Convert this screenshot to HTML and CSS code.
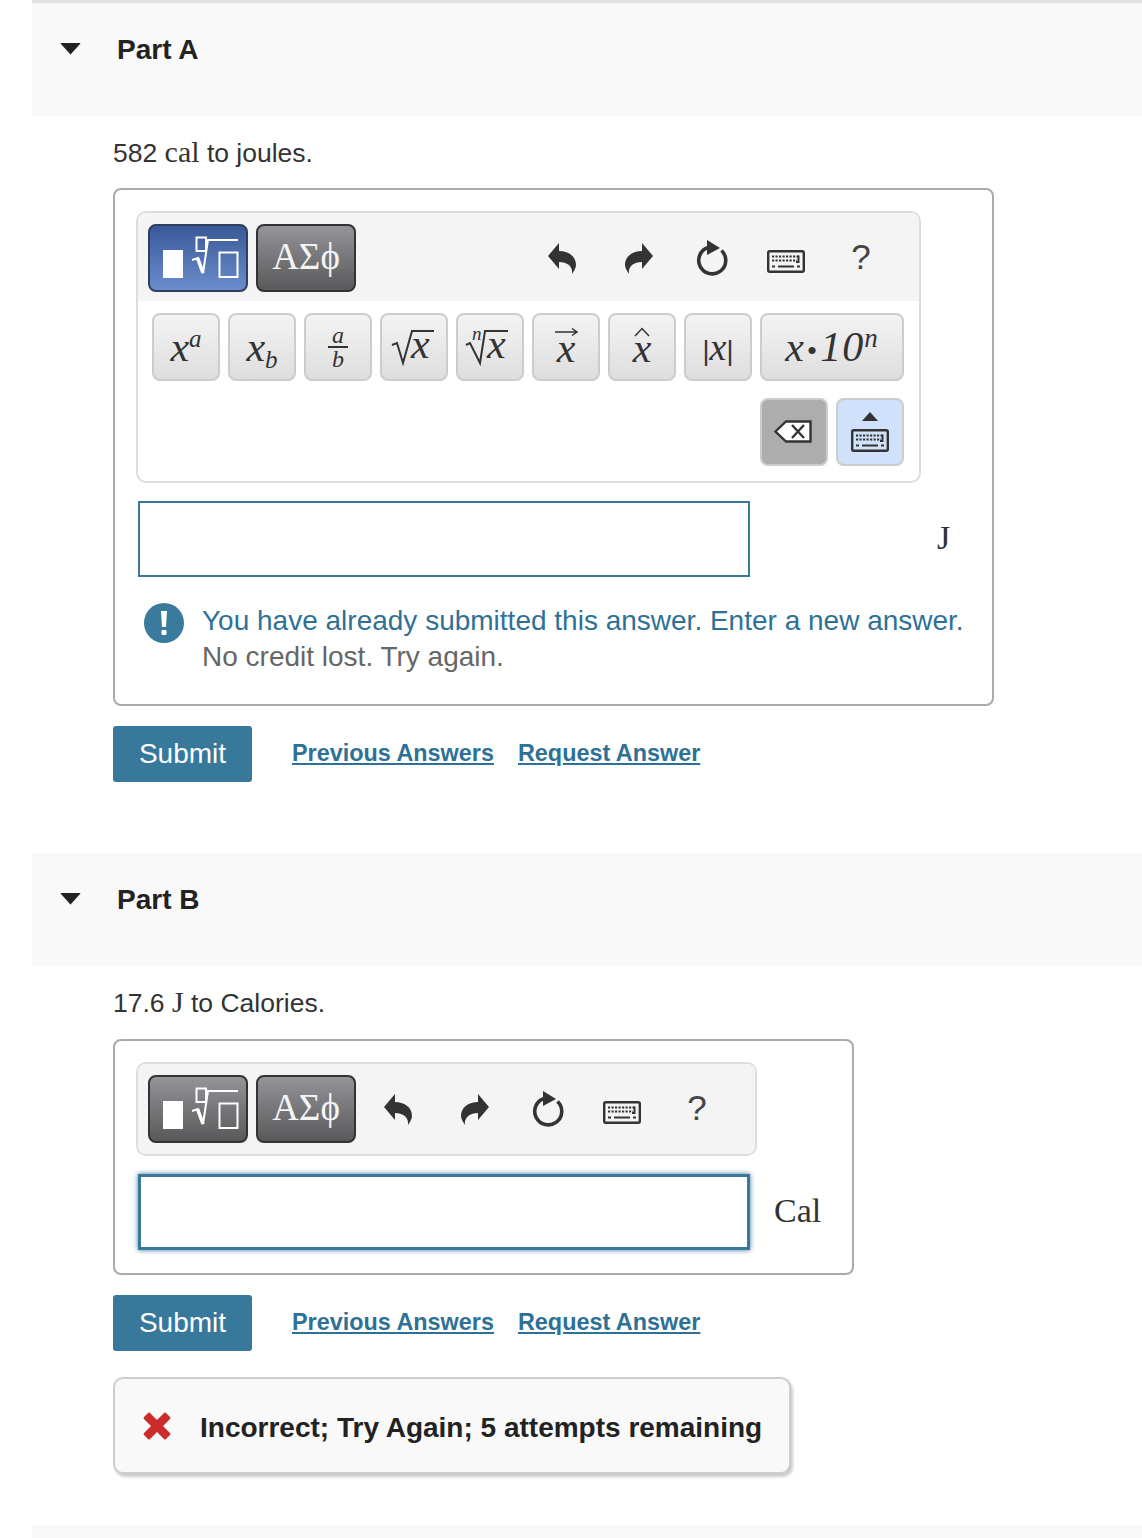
FILE: index.html
```html
<!DOCTYPE html>
<html lang="en">
<head>
  <meta charset="UTF-8" />
  <title>Part A and Part B</title>
  <link rel="stylesheet" href="styles.css">
</head>
<body>
  <svg class="defs" width="0" height="0">
    <symbol id="undo" viewBox="0 0 28 32">
      <path d="M0 14 L11 1 V9 C20 9 28 14 28 23 C28 26 26 29 24 32 C25 25 20 20 11 20 V27 Z" />
    </symbol>
    <symbol id="keyboard" viewBox="0 0 38 23">
      <rect x="1.2" y="1.2" width="35.6" height="20.6" rx="1.5" fill="none" stroke="currentColor" stroke-width="2.4" />
      <path d="M5 6.500 H33 M5 10.500 H30" fill="none" stroke="currentColor" stroke-width="2" stroke-dasharray="2.200 1.300" />
      <path d="M31.500 5.500 V12 H29 M11 16.500 H27" fill="none" stroke="currentColor" stroke-width="2" />
      <path d="M5 16.500 H8 M30 16.500 H33" fill="none" stroke="currentColor" stroke-width="2" />
    </symbol>
    <symbol id="refresh" viewBox="0 0 36 36">
      <path d="M14 7.500 A13.500 13.500 0 1 0 27.500 10.500" fill="none" stroke="currentColor" stroke-width="3.600" />
      <path d="M13 0 L26 8 L13 15 Z" />
    </symbol>
    <symbol id="template" viewBox="0 0 96 64">
      <rect x="13" y="24" width="20" height="28" fill="#fff" />
      <path d="M46.500 11.500 H56 V25 H46.500 Z M42 34 L48 32 L53 47 L58 14 H88 M69.500 26.500 H87.500 V51 H69.500 Z" fill="none" stroke="#fff" stroke-width="2" />
      <path d="M47.500 32 L53 47" fill="none" stroke="#fff" stroke-width="3.500" />
    </symbol>
  </svg>

  <!-- Part A -->
  <section class="part">
    <header class="part-head part-head-first">
      <svg class="caret" width="21" height="12" viewBox="0 0 21 12"><path d="M1 0 H20 Q21 0 20 1 L11 11 Q10.500 12 10 11 L1 1 Q0 0 1 0 Z" /></svg>
      <h2>Part A</h2>
    </header>
    <div class="part-body">
      <p class="question">582 <span class="unit">cal</span> to joules.</p>

      <div class="answer-box box-wide">
        <div class="editor">
          <div class="tools">
            <button class="mode mode-on"><svg width="96" height="64"><use href="#template" /></svg></button>
            <button class="mode"><span class="greek">ΑΣϕ</span></button>
            <div class="actions actions-wide">
              <span class="act act-undo"><svg width="28" height="32"><use href="#undo" /></svg></span>
              <span class="act act-redo"><svg class="flip" width="28" height="32"><use href="#undo" /></svg></span>
              <span class="act act-refresh"><svg width="36" height="36"><use href="#refresh" /></svg></span>
              <span class="act act-keys"><svg width="38" height="23"><use href="#keyboard" /></svg></span>
              <span class="act act-help">?</span>
            </div>
          </div>
          <div class="palette">
            <div class="keys">
              <button class="key"><span class="mi">x<sup>a</sup></span></button>
              <button class="key"><span class="mi">x<sub>b</sub></span></button>
              <button class="key"><span class="frac"><span class="num">a</span><span class="den">b</span></span></button>
              <button class="key">
                <svg class="root" width="44" height="40" viewBox="0 0 44 40"><path class="surd" d="M0 18 L5 16 L11 36 L20 4 H42" /><text class="surd-x" x="19" y="31">x</text></svg>
              </button>
              <button class="key">
                <svg class="root" width="48" height="40" viewBox="0 0 48 40"><path class="surd" d="M0 18 L4 16 L14 36 L19 4 H42" /><text class="surd-n" x="6" y="13">n</text><text class="surd-x" x="21" y="31">x</text></svg>
              </button>
              <button class="key">
                <span class="accent">
                  <svg width="24" height="10" viewBox="0 0 24 10"><path class="thin" d="M1 5 H22 M18 1.500 L23 5 L18 8.500" /></svg>
                  <span class="mi">x</span>
                </span>
              </button>
              <button class="key">
                <span class="accent">
                  <svg width="18" height="10" viewBox="0 0 18 10"><path class="thin" d="M2 9 L9 1.500 L16 9" /></svg>
                  <span class="mi">x</span>
                </span>
              </button>
              <button class="key"><span class="abs">|<span class="abs-x">x</span>|</span></button>
              <button class="key key-long"><span class="sci">x<span class="dot">•</span>10<sup>n</sup></span></button>
            </div>
            <div class="keys keys-end">
              <button class="key key-grey">
                <svg class="bs-icon" width="38" height="23" viewBox="0 0 38 23"><path class="bs" d="M1.500 11.500 L12 1.500 H36.500 V21.500 H12 Z" fill="#fff" /><path class="bs" d="M18 5 L30 18 M30 5 L18 18" fill="none" /></svg>
              </button>
              <button class="key key-blue">
                <span class="kb-up">
                  <svg width="16" height="9" viewBox="0 0 16 9"><path d="M8 0 L16 9 H0 Z" /></svg>
                  <svg width="38" height="23"><use href="#keyboard" /></svg>
                </span>
              </button>
            </div>
          </div>
        </div>

        <div class="answer-row">
          <div class="answer-input"></div>
          <span class="answer-unit unit-j">J</span>
        </div>

        <div class="message">
          <svg class="message-icon" width="40" height="40" viewBox="0 0 40 40">
            <circle cx="20" cy="20" r="20" fill="#3a7a9c" />
            <path d="M17 8 H23 L22 24 H18 Z" fill="#fff" />
            <rect x="17.500" y="27" width="5" height="5" rx="1" fill="#fff" />
          </svg>
          <div class="message-text">
            <div class="message-main">You have already submitted this answer. Enter a new answer.</div>
            <div class="message-sub">No credit lost. Try again.</div>
          </div>
        </div>
      </div>

      <div class="submit-row">
        <button class="submit">Submit</button>
        <a class="link" href="#">Previous Answers</a>
        <a class="link" href="#">Request Answer</a>
      </div>
    </div>
  </section>

  <!-- Part B -->
  <section class="part part-b">
    <header class="part-head">
      <svg class="caret" width="21" height="12" viewBox="0 0 21 12"><path d="M1 0 H20 Q21 0 20 1 L11 11 Q10.500 12 10 11 L1 1 Q0 0 1 0 Z" /></svg>
      <h2>Part B</h2>
    </header>
    <div class="part-body">
      <p class="question">17.6 <span class="unit">J</span> to Calories.</p>

      <div class="answer-box box-narrow">
        <div class="editor editor-narrow">
          <div class="tools tools-only">
            <button class="mode"><svg width="96" height="64"><use href="#template" /></svg></button>
            <button class="mode"><span class="greek">ΑΣϕ</span></button>
            <div class="actions">
              <span class="act act-undo"><svg width="28" height="32"><use href="#undo" /></svg></span>
              <span class="act act-redo"><svg class="flip" width="28" height="32"><use href="#undo" /></svg></span>
              <span class="act act-refresh"><svg width="36" height="36"><use href="#refresh" /></svg></span>
              <span class="act act-keys"><svg width="38" height="23"><use href="#keyboard" /></svg></span>
              <span class="act act-help">?</span>
            </div>
          </div>
        </div>

        <div class="answer-row">
          <div class="answer-input answer-focus"></div>
          <span class="answer-unit unit-cal">Cal</span>
        </div>
      </div>

      <div class="submit-row">
        <button class="submit">Submit</button>
        <a class="link" href="#">Previous Answers</a>
        <a class="link" href="#">Request Answer</a>
      </div>

      <div class="feedback">
        <svg width="28" height="28" viewBox="0 0 28 28"><path d="M7 1 L14 8 L21 1 Q22 0 23 1 L27 5 Q28 6 27 7 L20 14 L27 21 Q28 22 27 23 L23 27 Q22 28 21 27 L14 20 L7 27 Q6 28 5 27 L1 23 Q0 22 1 21 L8 14 L1 7 Q0 6 1 5 L5 1 Q6 0 7 1 Z" fill="#cc2b2b" /></svg>
        <span class="feedback-text">Incorrect; Try Again; 5 attempts remaining</span>
      </div>
    </div>
  </section>

  <div class="next-part"></div>
</body>
</html>
```

FILE: styles.css
```css
* {
  box-sizing: border-box;
}

body {
  margin: 0;
  font-family: "Liberation Sans", Arial, sans-serif;
  color: #333;
  background: #fff;
}

.defs {
  position: absolute;
}

button {
  padding: 0;
  font: inherit;
}

/* part header */

.part-head {
  display: flex;
  align-items: flex-start;
  height: 113px;
  margin-left: 32px;
  padding: 22px 0 0 28px;
  background: #f9f9f9;
}

.part-head-first {
  height: 116px;
  padding-top: 22px;
  border-top: 3px solid #e2e2e2;
}

.part-head h2 {
  margin: 0 0 0 36px;
  font-size: 28px;
  line-height: 50px;
  color: #222;
}

.caret {
  margin-top: 18px;
  fill: #222;
}

.part-b {
  margin-top: 71px;
}

.part-body {
  padding-left: 113px;
}

.question {
  margin: 18px 0 17px;
  font-size: 26.500px;
  line-height: 36px;
}

.unit {
  font-family: "Liberation Serif", serif;
  font-size: 30px;
}

.part-b .question {
  margin-bottom: 18px;
}

/* answer box */

.answer-box {
  border: 2px solid #aaa;
  border-radius: 8px;
  padding: 21px 21px 0;
}

.box-wide {
  width: 881px;
  height: 518px;
}

.box-narrow {
  width: 741px;
  height: 236px;
}

.editor {
  width: 785px;
  height: 272px;
  border: 2px solid #ddd;
  border-radius: 10px;
  overflow: hidden;
}

.editor-narrow {
  width: 621px;
  height: 94px;
}

.tools {
  display: flex;
  align-items: flex-start;
  gap: 8px;
  height: 88px;
  padding: 11px 0 0 10px;
  background: #f4f4f4;
}

.tools-only {
  height: 100%;
}

.mode {
  display: flex;
  align-items: center;
  justify-content: center;
  width: 100px;
  height: 68px;
  border: 2px solid #333;
  border-radius: 8px;
  background: linear-gradient(#949499, #59595b);
}

.mode-on {
  border-color: #2f3f5f;
  background: linear-gradient(#3a5897, #6b8dcb);
}

.greek {
  padding-bottom: 4px;
  font-family: "Liberation Serif", serif;
  font-size: 37px;
  line-height: 1;
  color: #f4f4f4;
}

.actions {
  display: flex;
  align-items: center;
  height: 68px;
  margin-left: -4px;
  color: #333;
  fill: #333;
}

.actions-wide {
  margin-left: 160px;
}

.act {
  display: flex;
  align-items: center;
  justify-content: center;
  height: 68px;
}

.act-undo {
  width: 76px;
}

.act-redo {
  width: 78px;
}

.act-refresh {
  width: 68px;
}

.act-keys {
  width: 80px;
  padding-top: 6px;
}

.act-help {
  width: 70px;
  padding-bottom: 2px;
  font-size: 35px;
  color: #444;
}

.flip {
  transform: scaleX(-1);
}

/* math palette */

.palette {
  padding: 12px 15px 0 14px;
}

.keys {
  display: flex;
  gap: 8px;
}

.keys-end {
  justify-content: flex-end;
  margin-top: 17px;
}

.key {
  display: flex;
  align-items: center;
  justify-content: center;
  width: 68px;
  height: 68px;
  border: 2px solid #ccc;
  border-radius: 8px;
  background: linear-gradient(#f3f3f3, #dedede);
  color: #333;
  fill: #333;
}

.key-long {
  width: 144px;
}

.key-grey {
  background: #adadad;
}

.key-blue {
  background: #d0e2fb;
}

.mi,
.sci,
.abs-x,
.surd-x,
.surd-n,
.num,
.den {
  font-family: "Liberation Serif", serif;
  font-style: italic;
}

.mi {
  font-size: 42px;
  line-height: 1;
}

.mi sup,
.mi sub,
.sci sup {
  font-size: 25px;
  line-height: 0;
}

.mi sup {
  vertical-align: 14px;
}

.mi sub {
  vertical-align: -7px;
}

.frac {
  display: flex;
  flex-direction: column;
  align-items: center;
  font-size: 24px;
  line-height: 22px;
}

.num {
  width: 20px;
  text-align: center;
  border-bottom: 2px solid #333;
}

.root {
  overflow: visible;
}

.surd {
  fill: none;
  stroke: #333;
  stroke-width: 2;
}

.surd-x {
  font-size: 42px;
  fill: #333;
}

.surd-n {
  font-size: 19px;
  fill: #333;
}

.accent {
  display: flex;
  flex-direction: column;
  align-items: center;
  margin-top: 2px;
}

.accent .mi {
  margin-top: -10px;
}

.thin {
  fill: none;
  stroke: #333;
  stroke-width: 1.500;
}

.abs {
  font-size: 27px;
}

.abs-x {
  font-size: 38px;
}

.sci {
  font-size: 42px;
  line-height: 1;
  letter-spacing: 1px;
}

.sci sup {
  font-size: 27px;
  vertical-align: 14px;
}

.dot {
  font-style: normal;
  font-size: 30px;
  margin: 0 2px;
}

.bs {
  stroke: #333;
  stroke-width: 2.400;
}

.bs-icon {
  margin: 0 2px 2px 0;
}

.kb-up {
  display: flex;
  flex-direction: column;
  align-items: center;
  gap: 8px;
  color: #333;
}

/* answer input */

.answer-row {
  display: flex;
  align-items: center;
  margin: 18px 0 0 2px;
}

.answer-input {
  width: 612px;
  height: 76px;
  border: 2px solid #37789b;
}

.answer-focus {
  border-width: 3px;
  box-shadow: 0 0 5px #37789b;
}

.answer-unit {
  padding-bottom: 2px;
  font-family: "Liberation Serif", serif;
  font-size: 34px;
  color: #333;
}

.unit-j {
  margin-left: 187px;
}

.unit-cal {
  margin-left: 24px;
}

/* message */

.message {
  display: flex;
  gap: 18px;
  margin: 25px 0 0 8px;
  font-size: 28px;
  line-height: 36px;
}

.message-icon {
  flex: none;
  margin-top: 1px;
}

.message-text {
  margin-top: 1px;
}

.message-main {
  color: #2f7196;
  white-space: nowrap;
}

.message-sub {
  color: #666;
}

/* submit */

.submit-row {
  display: flex;
  align-items: center;
  gap: 24px;
  margin-top: 20px;
}

.submit {
  width: 139px;
  height: 56px;
  margin-right: 16px;
  border: 0;
  border-radius: 3px;
  background: #37789b;
  color: #fff;
  font-size: 28px;
}

.link {
  margin-bottom: 2px;
  color: #2f7196;
  font-size: 23.400px;
  font-weight: bold;
}

/* feedback */

.feedback {
  display: flex;
  align-items: center;
  gap: 29px;
  width: 678px;
  height: 97px;
  margin-top: 26px;
  padding-left: 28px;
  border: 2px solid #ccc;
  border-radius: 10px;
  background: #f9f9f9;
  box-shadow: 2px 3px 3px #ccc;
  font-size: 28px;
  font-weight: bold;
  color: #222;
  white-space: nowrap;
}

.feedback-text {
  padding-top: 4px;
}

.next-part {
  height: 13px;
  margin: 51px 0 0 32px;
  background: #f9f9f9;
}
```
